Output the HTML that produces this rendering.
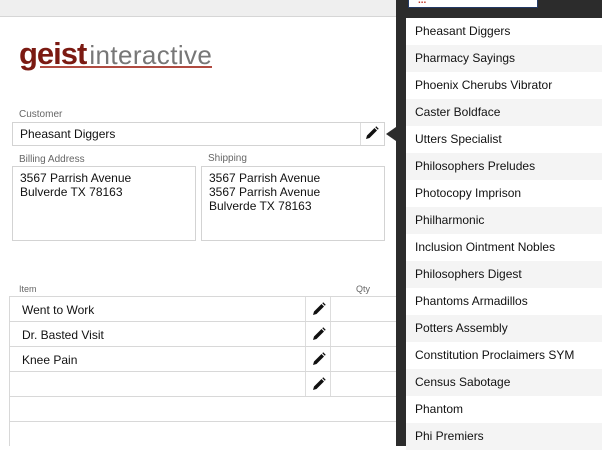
<!DOCTYPE html>
<html><head><meta charset="utf-8"><style>
*{margin:0;padding:0;box-sizing:border-box}
body{width:602px;height:446px;overflow:hidden;background:#fff;font-family:"Liberation Sans",Arial,sans-serif;position:relative;color:#111}
.top{position:absolute;left:0;top:0;width:396px;height:17px;background:#efefef;border-bottom:1px solid #d6d6d6}
.logo{position:absolute;left:19px;top:36px;white-space:nowrap}
.logo .g{font-weight:bold;color:#7b1a12;font-size:31px;letter-spacing:-1px}
.logo .i{color:#777;font-size:26px;margin-left:3px;letter-spacing:0.4px}
.uline{position:absolute;left:40px;top:66px;width:172px;height:2px;background:#b04a40}
.lbl{position:absolute;font-size:10px;color:#666}
.box{position:absolute;border:1px solid #d3d3d3;background:#fff;font-size:12px;line-height:14px;padding:4px 7px}
.pen{width:14px;height:14px}
.panel{position:absolute;left:396px;top:0;width:206px;height:446px;background:#2c2c2c}
.search{position:absolute;left:408px;top:-4px;width:130px;height:12px;background:#fff;border:1px solid #233a66}
.search span{position:absolute;left:9px;top:-2px;color:#c0392b;font-size:10px;font-weight:bold}
.list{position:absolute;left:406px;top:18px;width:196px}
.list div{height:27px;line-height:27px;padding-left:9px;font-size:12px;color:#111;background:#fff}
.list div:nth-child(even){background:#f4f4f4}
.arrow{position:absolute;left:386px;top:127px;width:0;height:0;border-top:7px solid transparent;border-bottom:7px solid transparent;border-right:10px solid #2c2c2c}
.row{position:absolute;left:9px;width:387px;height:25px;border-top:1px solid #d8d8d8;font-size:12px}
.row .t{position:absolute;left:13px;top:6px}
.row .c1{position:absolute;left:296px;top:0;width:26px;height:25px;border-left:1px solid #ddd;border-right:1px solid #ddd}
.row svg{position:absolute;left:6px;top:5px}
</style></head><body>
<div class="top"></div>
<div class="logo"><span class="g">geist</span><span class="i">interactive</span></div>
<div class="uline"></div>

<div class="lbl" style="left:19px;top:109px">Customer</div>
<div class="box" style="left:12px;top:122px;width:373px;height:24px;padding-top:4px">Pheasant Diggers</div>
<div style="position:absolute;left:360px;top:123px;width:1px;height:22px;background:#ddd"></div>
<svg class="pen" style="position:absolute;left:365px;top:126px" viewBox="0 0 14 14"><path d="M1 13 L2 9.5 L9.5 2 L12 4.5 L4.5 12 Z" fill="#111"/><path d="M10.3 1.2 L11.2 0.3 L13.7 2.8 L12.8 3.7 Z" fill="#111"/></svg>
<div class="arrow"></div>

<div class="lbl" style="left:19px;top:154px">Billing Address</div>
<div class="lbl" style="left:208px;top:153px">Shipping</div>
<div class="box" style="left:12px;top:166px;width:184px;height:75px">3567 Parrish Avenue<br>Bulverde TX 78163</div>
<div class="box" style="left:201px;top:166px;width:184px;height:75px">3567 Parrish Avenue<br>3567 Parrish Avenue<br>Bulverde TX 78163</div>

<div class="lbl" style="left:19px;top:284px;font-size:9px">Item</div>
<div class="lbl" style="left:356px;top:284px;font-size:9px">Qty</div>
<div class="row" style="top:296px"><span class="t">Went to Work</span><div class="c1"><svg class="pen" viewBox="0 0 14 14"><path d="M1 13 L2 9.5 L9.5 2 L12 4.5 L4.5 12 Z" fill="#111"/><path d="M10.3 1.2 L11.2 0.3 L13.7 2.8 L12.8 3.7 Z" fill="#111"/></svg></div></div>
<div class="row" style="top:321px"><span class="t">Dr. Basted Visit</span><div class="c1"><svg class="pen" viewBox="0 0 14 14"><path d="M1 13 L2 9.5 L9.5 2 L12 4.5 L4.5 12 Z" fill="#111"/><path d="M10.3 1.2 L11.2 0.3 L13.7 2.8 L12.8 3.7 Z" fill="#111"/></svg></div></div>
<div class="row" style="top:346px"><span class="t">Knee Pain</span><div class="c1"><svg class="pen" viewBox="0 0 14 14"><path d="M1 13 L2 9.5 L9.5 2 L12 4.5 L4.5 12 Z" fill="#111"/><path d="M10.3 1.2 L11.2 0.3 L13.7 2.8 L12.8 3.7 Z" fill="#111"/></svg></div></div>
<div class="row" style="top:371px"><div class="c1"><svg class="pen" viewBox="0 0 14 14"><path d="M1 13 L2 9.5 L9.5 2 L12 4.5 L4.5 12 Z" fill="#111"/><path d="M10.3 1.2 L11.2 0.3 L13.7 2.8 L12.8 3.7 Z" fill="#111"/></svg></div></div>
<div class="row" style="top:396px"></div>
<div class="row" style="top:421px"></div>
<div style="position:absolute;left:9px;top:296px;width:1px;height:150px;background:#d8d8d8"></div>

<div class="panel"></div>
<div class="search"><span>...</span></div>
<div class="list">
<div>Pheasant Diggers</div><div>Pharmacy Sayings</div><div>Phoenix Cherubs Vibrator</div><div>Caster Boldface</div><div>Utters Specialist</div><div>Philosophers Preludes</div><div>Photocopy Imprison</div><div>Philharmonic</div><div>Inclusion Ointment Nobles</div><div>Philosophers Digest</div><div>Phantoms Armadillos</div><div>Potters Assembly</div><div>Constitution Proclaimers SYM</div><div>Census Sabotage</div><div>Phantom</div><div>Phi Premiers</div>
</div>
</body></html>
